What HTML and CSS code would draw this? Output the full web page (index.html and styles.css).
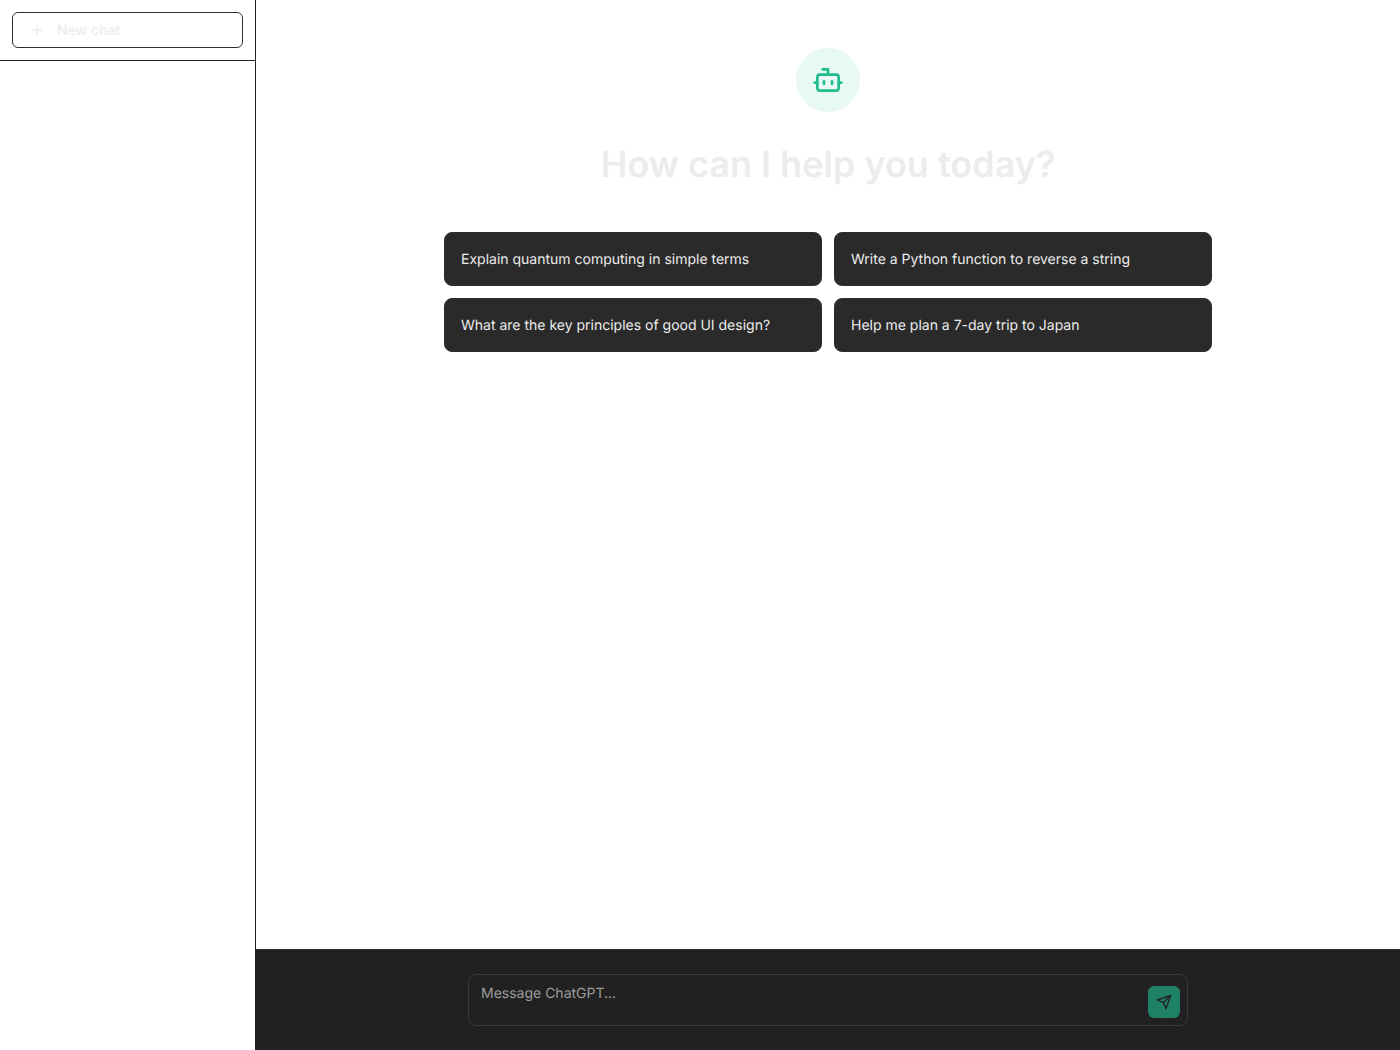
FILE: index.html
```html
<!DOCTYPE html>
<html lang="en">
<head>
    <meta charset="UTF-8">
    <meta name="viewport" content="width=device-width, initial-scale=1.0">
    <title>ChatGPT</title>
    <link rel="stylesheet" href="styles.css">
</head>
<body>
    <!-- Sidebar -->
    <aside class="sidebar">
        <div class="sidebar-top">
            <button class="new-chat">
                <svg class="new-chat-icon" viewBox="0 0 24 24"><path d="M5 12h14"/><path d="M12 5v14"/></svg>
                New chat
            </button>
        </div>
    </aside>

    <main class="main">
        <!-- Welcome -->
        <section class="welcome">
            <div class="logo">
                <svg class="logo-icon" viewBox="0 0 24 24">
                    <path d="M12 8V4H8"/>
                    <rect x="4" y="8" width="16" height="12" rx="2"/>
                    <path d="M2 14h2"/>
                    <path d="M20 14h2"/>
                    <path d="M15 13v2"/>
                    <path d="M9 13v2"/>
                </svg>
            </div>
            <h1>How can I help you today?</h1>
            <div class="suggestions">
                <button class="suggestion">Explain quantum computing in simple terms</button>
                <button class="suggestion">Write a Python function to reverse a string</button>
                <button class="suggestion">What are the key principles of good UI design?</button>
                <button class="suggestion">Help me plan a 7-day trip to Japan</button>
            </div>
        </section>

        <!-- Message box -->
        <footer class="composer">
            <div class="input-box">
                <textarea class="input" placeholder="Message ChatGPT..."></textarea>
                <button class="send">
                    <svg class="send-icon" viewBox="0 0 24 24"><path d="m22 2-7 20-4-9-9-4Z"/><path d="M22 2 11 13"/></svg>
                </button>
            </div>
        </footer>
    </main>
</body>
</html>
```

FILE: styles.css
```css
* { box-sizing: border-box; }
html, body { height: 100%; }
body {
    margin: 0; display: flex; height: 100vh; overflow: hidden;
    font-family: Inter, "Liberation Sans", sans-serif; background: #fff;
    text-rendering: geometricPrecision;
}
svg { fill: none; stroke: currentColor; stroke-width: 2; stroke-linecap: round; stroke-linejoin: round; }
button { font-family: inherit; cursor: pointer; text-rendering: inherit; }

/* Sidebar */
.sidebar { width: 256px; flex-shrink: 0; border-right: 1px solid #212121; background: #fff; }
.sidebar-top { height: 61px; padding: 12px; border-bottom: 1px solid #212121; }
.new-chat {
    width: 100%; height: 36px; padding: 0 16px; display: flex; align-items: center; gap: 12px;
    background: transparent; border: 1px solid #2f2f2f; border-radius: 6px;
    color: #ececec; font-size: 14px; font-weight: 500;
}
.new-chat-icon { width: 16px; height: 16px; }

/* Main */
.main { flex: 1; min-width: 0; display: flex; flex-direction: column; }
.welcome { flex: 1; display: flex; flex-direction: column; align-items: center; padding-top: 48px; }
.logo {
    width: 64px; height: 64px; border-radius: 50%; background: #e8f8f3; color: #20bd8f;
    display: flex; align-items: center; justify-content: center;
}
.logo-icon { width: 32px; height: 32px; }
h1 { margin: 30px 0 46px; font-size: 36px; line-height: 44px; font-weight: 600; color: #ececec; }
.suggestions { width: 768px; display: grid; grid-template-columns: 1fr 1fr; gap: 12px; }
.suggestion {
    height: 54px; padding: 0 16px; text-align: left; background: #2a2a2a; color: #ececec;
    border: 1px solid #2f2f2f; border-radius: 8px; font-size: 14px;
}

/* Message box */
.composer { height: 101px; padding-top: 24px; background: #212121; border-top: 1px solid #2f2f2f; }
.input-box {
    position: relative; width: 720px; height: 52px; margin: 0 auto;
    border: 1px solid #3a3a3a; border-radius: 8px;
}
.input {
    display: block; width: 100%; height: 100%; padding: 10px 60px 8px 12px; background: transparent; border: none;
    outline: none; resize: none; color: #ececec; font-family: inherit; font-size: 14px; line-height: 18px;
    text-rendering: inherit;
}
.input::placeholder { color: #9b9b9b; }
.send {
    position: absolute; right: 7px; top: 11px; width: 32px; height: 32px; padding: 0;
    display: flex; align-items: center; justify-content: center;
    background: #1f8165; color: #212121; border: none; border-radius: 6px;
}
.send-icon { width: 16px; height: 16px; }
```
